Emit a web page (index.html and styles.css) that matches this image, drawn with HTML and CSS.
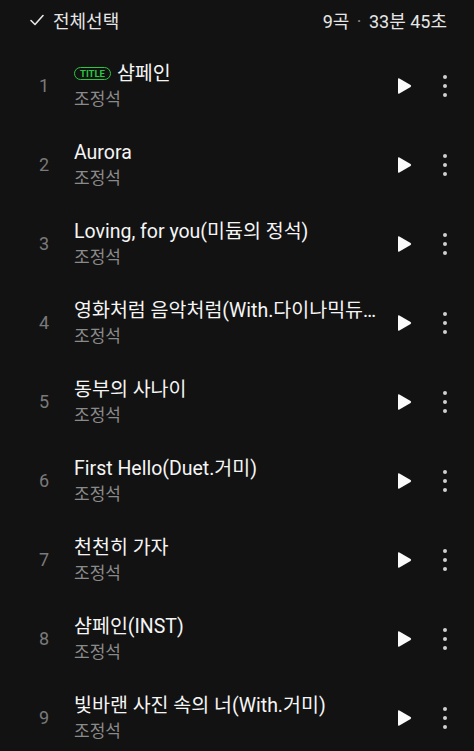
FILE: index.html
```html
<!DOCTYPE html>
<html lang="ko">
<head>
<meta charset="utf-8">
<link rel="stylesheet" href="styles.css">
</head>
<body>
<div class="page">
  <div class="header">
    <div class="select-all">
      <svg class="check" width="14" height="12" viewBox="0 0 14 12"><path d="M1 6.5 L5 10.5 L13 1.5" fill="none" stroke="#e6e6e6" stroke-width="1.6" stroke-linecap="round" stroke-linejoin="round"/></svg>
      <span>전체선택</span>
    </div>
    <div class="summary">9곡 <span class="dot">·</span> 33분 45초</div>
  </div>
  <ul class="list">
    <li class="row"><span class="num">1</span><div class="info"><div class="title"><span class="badge">TITLE</span>샴페인</div><div class="artist">조정석</div></div><svg class="play" viewBox="0 0 16 18"><path d="M2 2.2 Q2 0.6 3.4 1.4 L14.6 7.9 Q15.8 9 14.6 10.1 L3.4 16.6 Q2 17.4 2 15.8 Z" fill="#fafafa"/></svg><span class="more"><i></i><i></i><i></i></span></li>
    <li class="row"><span class="num">2</span><div class="info"><div class="title">Aurora</div><div class="artist">조정석</div></div><svg class="play" viewBox="0 0 16 18"><path d="M2 2.2 Q2 0.6 3.4 1.4 L14.6 7.9 Q15.8 9 14.6 10.1 L3.4 16.6 Q2 17.4 2 15.8 Z" fill="#fafafa"/></svg><span class="more"><i></i><i></i><i></i></span></li>
    <li class="row"><span class="num">3</span><div class="info"><div class="title">Loving, for you(미듐의 정석)</div><div class="artist">조정석</div></div><svg class="play" viewBox="0 0 16 18"><path d="M2 2.2 Q2 0.6 3.4 1.4 L14.6 7.9 Q15.8 9 14.6 10.1 L3.4 16.6 Q2 17.4 2 15.8 Z" fill="#fafafa"/></svg><span class="more"><i></i><i></i><i></i></span></li>
    <li class="row"><span class="num">4</span><div class="info"><div class="title">영화처럼 음악처럼(With.다이나믹듀오)</div><div class="artist">조정석</div></div><svg class="play" viewBox="0 0 16 18"><path d="M2 2.2 Q2 0.6 3.4 1.4 L14.6 7.9 Q15.8 9 14.6 10.1 L3.4 16.6 Q2 17.4 2 15.8 Z" fill="#fafafa"/></svg><span class="more"><i></i><i></i><i></i></span></li>
    <li class="row"><span class="num">5</span><div class="info"><div class="title">동부의 사나이</div><div class="artist">조정석</div></div><svg class="play" viewBox="0 0 16 18"><path d="M2 2.2 Q2 0.6 3.4 1.4 L14.6 7.9 Q15.8 9 14.6 10.1 L3.4 16.6 Q2 17.4 2 15.8 Z" fill="#fafafa"/></svg><span class="more"><i></i><i></i><i></i></span></li>
    <li class="row"><span class="num">6</span><div class="info"><div class="title">First Hello(Duet.거미)</div><div class="artist">조정석</div></div><svg class="play" viewBox="0 0 16 18"><path d="M2 2.2 Q2 0.6 3.4 1.4 L14.6 7.9 Q15.8 9 14.6 10.1 L3.4 16.6 Q2 17.4 2 15.8 Z" fill="#fafafa"/></svg><span class="more"><i></i><i></i><i></i></span></li>
    <li class="row"><span class="num">7</span><div class="info"><div class="title">천천히 가자</div><div class="artist">조정석</div></div><svg class="play" viewBox="0 0 16 18"><path d="M2 2.2 Q2 0.6 3.4 1.4 L14.6 7.9 Q15.8 9 14.6 10.1 L3.4 16.6 Q2 17.4 2 15.8 Z" fill="#fafafa"/></svg><span class="more"><i></i><i></i><i></i></span></li>
    <li class="row"><span class="num">8</span><div class="info"><div class="title">샴페인(INST)</div><div class="artist">조정석</div></div><svg class="play" viewBox="0 0 16 18"><path d="M2 2.2 Q2 0.6 3.4 1.4 L14.6 7.9 Q15.8 9 14.6 10.1 L3.4 16.6 Q2 17.4 2 15.8 Z" fill="#fafafa"/></svg><span class="more"><i></i><i></i><i></i></span></li>
    <li class="row"><span class="num">9</span><div class="info"><div class="title">빛바랜 사진 속의 너(With.거미)</div><div class="artist">조정석</div></div><svg class="play" viewBox="0 0 16 18"><path d="M2 2.2 Q2 0.6 3.4 1.4 L14.6 7.9 Q15.8 9 14.6 10.1 L3.4 16.6 Q2 17.4 2 15.8 Z" fill="#fafafa"/></svg><span class="more"><i></i><i></i><i></i></span></li>
  </ul>
</div>
</body>
</html>
```
FILE: styles.css
```css
* { box-sizing: border-box; }
html, body { margin: 0; padding: 0; background: #121212; }
body {
  font-family: Roboto, "Noto Sans CJK KR", sans-serif;
  color: #f2f2f2;
  width: 474px;
  height: 751px;
  overflow: hidden;
}
.header {
  height: 46px;
  padding: 0 27px 6px 30px;
  display: flex;
  align-items: center;
  justify-content: space-between;
}
.select-all {
  display: flex;
  align-items: center;
  gap: 9px;
  font-size: 18px;
  color: #e6e6e6;
}
.summary {
  font-size: 18px;
  color: #e6e6e6;
}
.summary .dot { color: #888; margin: 0 3px; }
.list { list-style: none; margin: 0; padding: 0; }
.row {
  height: 79px;
  display: flex;
  align-items: center;
  padding-left: 39px;
  padding-right: 27px;
}
.num {
  width: 35px;
  font-size: 18px;
  color: #7a7a7a;
}
.info {
  flex: 1;
  min-width: 0;
  display: flex;
  flex-direction: column;
  gap: 4px;
  padding-bottom: 1px;
}
.title {
  font-size: 19.5px;
  line-height: 23px;
  color: #f5f5f5;
  white-space: nowrap;
  overflow: hidden;
  text-overflow: ellipsis;
  max-width: 306px;
}
.badge {
  display: inline-block;
  vertical-align: 3px;
  border: 1.8px solid #27c93f;
  color: #27c93f;
  font-size: 9.5px;
  font-weight: 700;
  line-height: 11.5px;
  padding: 0 5px;
  border-radius: 8px;
  margin-right: 6px;
}
.artist {
  font-size: 17px;
  line-height: 20px;
  color: #8a8a8a;
}
.play {
  width: 16px;
  height: 18px;
  margin-right: 31px;
  flex: none;
}
.more {
  display: flex;
  flex-direction: column;
  gap: 5px;
  width: 4px;
}
.more i {
  display: block;
  width: 4px; height: 4px;
  border-radius: 50%;
  background: #d0d0d0;
}
```
